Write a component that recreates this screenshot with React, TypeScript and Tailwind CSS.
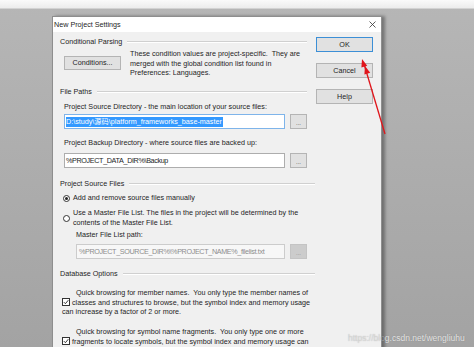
import React from "react";

function GroupTitle({ label, short }: { label: string; short?: boolean }) {
    return (
        <div className={`flex items-center h-[10px] ${short ? "mr-[5px]" : "mr-px"}`}>
            <span className="whitespace-nowrap">{label}</span>
            <span className="flex-1 ml-[5px] h-[2px] border-t border-[#d0d0d0] border-b border-b-white" />
        </div>
    )
}

function DotsButton({ disabled }: { disabled?: boolean }) {
    return (
        <div className={`ml-[5px] w-[17px] h-[15px] border flex items-center justify-center text-[6px] leading-none ${disabled ? "bg-[#cccccc] border-[#c4c4c4] text-[#8a8a8a]" : "bg-[#e1e1e1] border-[#b4b4b4] text-[#333]"}`}>
            <span className="mt-[2px]">...</span>
        </div>
    )
}

function DialogButton({ label, primary, className }: { label: string; primary?: boolean; className?: string }) {
    return (
        <div className={`w-[57px] h-[15px] flex items-center justify-center bg-[#e1e1e1] border ${primary ? "border-[#3c8fd6]" : "border-[#b4b4b4]"} ${className ?? ""}`}>
            {label}
        </div>
    )
}

function Radio({ checked }: { checked?: boolean }) {
    return (
        <span className="w-[7px] h-[7px] rounded-full border border-[#333] bg-white flex items-center justify-center shrink-0">
            {checked && <span className="w-[3px] h-[3px] rounded-full bg-[#222]" />}
        </span>
    )
}

function Check() {
    return (
        <span className="w-[8px] h-[8px] border border-[#333] bg-white shrink-0 flex items-center justify-center">
            <svg width="6" height="6" viewBox="0 0 6 6">
                <path d="M0.8 3.1 L2.4 4.7 L5.3 1.2" fill="none" stroke="#222" strokeWidth="0.9" />
            </svg>
        </span>
    )
}

export default function App() {
    return (
        <div className="relative w-[474px] h-[347px] overflow-hidden bg-linear-to-b from-[#b6b6b6] to-[#a3a3a3] font-['Liberation_Sans','Noto_Sans_CJK_SC',sans-serif] text-[7.2px] leading-[10px] text-[#1e1e1e]">
            <div className="h-[9px] bg-linear-to-b from-[#fafafa] to-[#ececec] border-b border-[#d2d2d2]" />
            <div className="pl-[52px] pt-[7px]">
                <div className="w-[330px] h-[340px] flex flex-col border border-[#8e8e8e] shadow-[3px_0_3px_rgba(0,0,0,0.35)]">
                    <div className="h-[15px] bg-white flex items-center justify-between pl-[1px] pr-[5px]">
                        <span>New Project Settings</span>
                        <svg width="7" height="7" viewBox="0 0 7 7">
                            <path d="M0.5 0.5 L6.5 6.5 M6.5 0.5 L0.5 6.5" stroke="#333" strokeWidth="0.8" />
                        </svg>
                    </div>
                    <div className="flex-1 flex bg-[#f0f0f0]">
                        <div className="w-[263px] pl-[7px] flex flex-col">
                            <div className="mt-[5px] mr-[4px]"><GroupTitle label="Conditional Parsing" short /></div>
                            <div className="flex mt-[2px]">
                                <div className="ml-[4px] mt-[7px] w-[57px] h-[14px] flex items-center justify-center bg-[#e1e1e1] border border-[#b4b4b4]">Conditions...</div>
                                <p className="ml-[9px] leading-[9.5px] whitespace-nowrap">
                                    These condition values are project-specific.&nbsp; They are<br />
                                    merged with the global condition list found in<br />
                                    Preferences: Languages.
                                </p>
                            </div>

                            <div className="mt-[9.5px] mr-[4px]"><GroupTitle label="File Paths" short /></div>
                            <div className="mt-[5px] ml-[4px] h-[10px] whitespace-nowrap">Project Source Directory - the main location of your source files:</div>
                            <div className="mt-[2px] ml-[4px] flex">
                                <div className="w-[221px] h-[15px] bg-white border border-[#7eb4ea] flex items-center">
                                    <span className="ml-[1px] bg-[#3399ff] text-white h-[10px] leading-[10px] whitespace-nowrap pr-px">D:\study\源码\platform_frameworks_base-master</span>
                                </div>
                                <DotsButton />
                            </div>
                            <div className="mt-[9px] ml-[4px] h-[10px] whitespace-nowrap">Project Backup Directory - where source files are backed up:</div>
                            <div className="mt-[5px] ml-[4px] flex">
                                <div className="w-[221px] h-[15px] bg-white border border-[#adadad] flex items-center pl-[1px] tracking-[-0.35px]">%PROJECT_DATA_DIR%\Backup</div>
                                <DotsButton />
                            </div>

                            <div className="mt-[11px]"><GroupTitle label="Project Source Files" /></div>
                            <div className="mt-[4px] ml-[3px] h-[10px] flex items-center">
                                <Radio checked />
                                <span className="ml-[3px]">Add and remove source files manually</span>
                            </div>
                            <div className="mt-[5px] ml-[3px] flex items-center">
                                <Radio />
                                <div className="ml-[3px] whitespace-nowrap">
                                    Use a Master File List. The files in the project will be determined by the<br />
                                    contents of the Master File List.
                                </div>
                            </div>
                            <div className="mt-[2px] ml-[16px] h-[10px]">Master File List path:</div>
                            <div className="mt-[4px] ml-[16px] flex">
                                <div className="w-[209px] h-[15px] bg-[#f7f7f7] border border-[#cccccc] flex items-center pl-[2px] text-[#8d8d8d] whitespace-nowrap overflow-hidden tracking-[-0.35px]">%PROJECT_SOURCE_DIR%\%PROJECT_NAME%_filelist.txt</div>
                                <DotsButton disabled />
                            </div>

                            <div className="mt-[10px]"><GroupTitle label="Database Options" /></div>
                            <div className="mt-[9px] leading-[9.5px] whitespace-nowrap">
                                <div className="ml-[16px]">Quick browsing for member names.&nbsp; You only type the member names of</div>
                                <div className="ml-[2px] flex items-center">
                                    <Check />
                                    <span className="ml-[2px]">classes and structures to browse, but the symbol index and memory usage</span>
                                </div>
                                <div className="ml-[2px]">can increase by a factor of 2 or more.</div>
                            </div>
                            <div className="mt-[10.5px] leading-[9.5px] whitespace-nowrap">
                                <div className="ml-[16px]">Quick browsing for symbol name fragments.&nbsp; You only type one or more</div>
                                <div className="ml-[2px] flex items-center">
                                    <Check />
                                    <span className="ml-[2px]">fragments to locate symbols, but the symbol index and memory usage can</span>
                                </div>
                            </div>
                        </div>
                        <div className="flex flex-col">
                            <DialogButton label="OK" primary className="mt-[5px]" />
                            <DialogButton label="Cancel" className="mt-[11px]" />
                            <DialogButton label="Help" className="mt-[11px]" />
                        </div>
                    </div>
                </div>
            </div>

            <svg className="absolute inset-0 pointer-events-none" width="474" height="347" viewBox="0 0 474 347">
                <path d="M364 64 L385 134" stroke="#e0151b" strokeWidth="1.3" fill="none" />
                <polygon points="362,59 367.2,65.8 361.4,67.6" fill="#e0151b" />
                <polygon points="365,66 370.2,72.8 364.4,74.6" fill="#e0151b" />
            </svg>

            <div className="absolute left-[348px] top-[333px] text-[8.5px] leading-[10px] text-white/80 [text-shadow:0_0_1px_rgba(0,0,0,0.3)] whitespace-nowrap">
                <span className="text-white/40">https://blo</span>g.csdn.net/wengliuhu
            </div>
        </div>
    )
}
